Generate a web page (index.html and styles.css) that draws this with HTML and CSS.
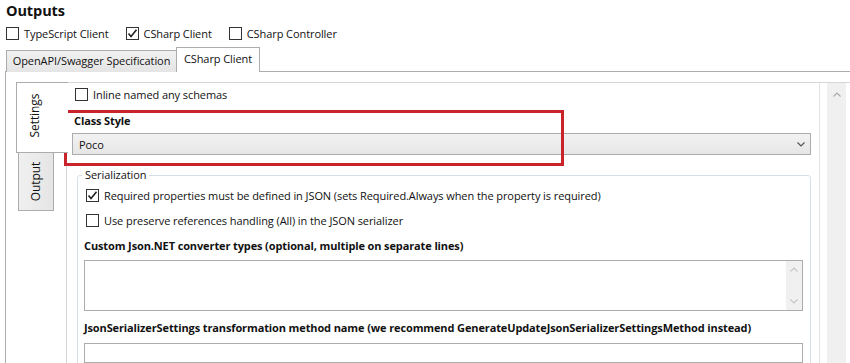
FILE: index.html
```html
<!DOCTYPE html>
<html>
<head>
<meta charset="utf-8">
<link rel="stylesheet" href="styles.css">
</head>
<body>
<div class="title">Outputs</div>
<div class="outs">
  <div class="chk"><span class="box"></span><span>TypeScript Client</span></div>
  <div class="chk"><span class="box"><svg viewBox="0 0 13 13" width="13" height="13"><path d="M2.5 6.5 L5 9.5 L10.5 2.8" fill="none" stroke="#222" stroke-width="1.6"/></svg></span><span>CSharp Client</span></div>
  <div class="chk"><span class="box"></span><span>CSharp Controller</span></div>
</div>
<div class="tabs">
  <div class="tab">OpenAPI/Swagger Specification</div>
  <div class="tab sel">CSharp Client</div>
</div>
<div class="panel">
  <div class="vtabs">
    <div class="vtab sel"><span>Settings</span></div>
    <div class="vtab"><span>Output</span></div>
  </div>
  <div class="frame">
    <div class="content">
      <div class="chk inline"><span class="box"></span><span>Inline named any schemas</span></div>
      <div class="lbl first">Class Style</div>
      <div class="combo"><span>Poco</span><svg viewBox="0 0 8 5" width="8" height="5"><path d="M0.5 0.5 L4 4 L7.5 0.5" fill="none" stroke="#555" stroke-width="1.2"/></svg></div>
      <div class="group">
        <div class="legend">Serialization</div>
        <div class="chk gchk c1"><span class="box"><svg viewBox="0 0 13 13" width="13" height="13"><path d="M2.5 6.5 L5 9.5 L10.5 2.8" fill="none" stroke="#222" stroke-width="1.6"/></svg></span><span>Required properties must be defined in JSON (sets Required.Always when the property is required)</span></div>
        <div class="chk gchk c2"><span class="box"></span><span>Use preserve references handling (All) in the JSON serializer</span></div>
        <div class="lbl">Custom Json.NET converter types (optional, multiple on separate lines)</div>
        <div class="area">
          <div class="ascroll">
            <svg viewBox="0 0 8 5" width="8" height="5"><path d="M0.5 4.5 L4 1 L7.5 4.5" fill="none" stroke="#c4c4c4" stroke-width="1.1"/></svg>
            <svg viewBox="0 0 8 5" width="8" height="5"><path d="M0.5 0.5 L4 4 L7.5 0.5" fill="none" stroke="#c4c4c4" stroke-width="1.1"/></svg>
          </div>
        </div>
        <div class="lbl">JsonSerializerSettings transformation method name (we recommend GenerateUpdateJsonSerializerSettingsMethod instead)</div>
        <div class="input"></div>
      </div>
      <div class="redbox"></div>
    </div>
    <div class="vscroll">
      <svg viewBox="0 0 8 5" width="8" height="5"><path d="M0.5 4.5 L4 1 L7.5 4.5" fill="none" stroke="#a8a8a8" stroke-width="1.1"/></svg>
    </div>
  </div>
</div>
</body>
</html>
```

FILE: styles.css
```css
* { box-sizing: border-box; }
html, body { margin: 0; padding: 0; background: #fff; }
body {
  width: 850px;
  height: 363px;
  overflow: hidden;
  font-family: "Open Sans", "Noto Sans", sans-serif;
  font-size: 11px;
  letter-spacing: -0.08px;
  color: #111;
}
.title {
  font-size: 14.5px;
  font-weight: 700;
  letter-spacing: -0.1px;
  padding: 1px 0 0 6px;
  height: 21px;
  line-height: 19px;
}
.outs {
  display: flex;
  gap: 17px;
  padding-left: 6px;
  margin-top: 4px;
  height: 16px;
}
.chk {
  display: flex;
  align-items: center;
  gap: 5px;
  line-height: 15px;
  white-space: nowrap;
}
.box {
  width: 13px;
  height: 13px;
  border: 1px solid #333;
  background: #fff;
  display: inline-flex;
  flex: none;
  position: relative;
}
.box svg { position: absolute; left: -1px; top: -1px; }
.tabs {
  display: flex;
  align-items: flex-end;
  padding-left: 6px;
  margin-top: 6px;
  height: 24px;
  position: relative;
  z-index: 2;
}
.tab {
  height: 22px;
  line-height: 20px;
  padding: 0;
  border: 1px solid #acacac;
  border-bottom: none;
  background: linear-gradient(#f0f0f0, #e5e5e5);
  margin-bottom: -1px;
  width: 171px;
  text-align: center;
  white-space: nowrap;
}
.tab.sel {
  height: 25px;
  line-height: 22px;
  background: #fff;
  width: 84px;
  margin-left: -1px;
  margin-bottom: -1px;
}
.panel {
  margin-left: 5px;
  border-top: 1px solid #acacac;
  border-left: 1px solid #acacac;
  height: 300px;
  display: flex;
  padding-top: 10px;
}
.vtabs {
  width: 61px;
  padding-left: 10px;
  flex: none;
  position: relative;
  z-index: 2;
}
.vtab {
  width: 36px;
  height: 58px;
  margin-left: 2px;
  border: 1px solid #acacac;
  border-top: none;
  background: linear-gradient(90deg, #f0f0f0, #e5e5e5);
  display: flex;
  align-items: center;
  justify-content: center;
}
.vtab span {
  transform: rotate(-90deg);
  white-space: nowrap;
  font-size: 12px;
}
.vtab.sel {
  width: 52px;
  height: 71px;
  margin-left: 0;
  border-top: 1px solid #acacac;
  border-right: none;
  background: #fff;
  padding-right: 16px;
  padding-bottom: 4px;
}
.frame {
  flex: 1;
  display: flex;
  border-top: 1px solid #d6d6d6;
  border-left: 1px solid #d6d6d6;
  margin-left: -1px;
}
.content {
  flex: none;
  width: 753px;
  border-right: 1px solid #e4e4e4;
  padding: 4px 0 0 5px;
  position: relative;
}
.inline { margin-left: 3px; height: 15px; }
.lbl {
  font-weight: 700;
  letter-spacing: -0.12px;
  line-height: 15px;
  margin-top: 10px;
  white-space: nowrap;
}
.lbl.first { margin-top: 11px; margin-left: 2px; }
.combo {
  margin-top: 5px;
  width: 739px;
  height: 22px;
  border: 1px solid #acacac;
  background: linear-gradient(#f2f2f2, #e6e6e6);
  display: flex;
  align-items: center;
  justify-content: space-between;
  padding: 0 5px 0 6px;
}
.group {
  margin: 20px 0 0 5px;
  width: 734px;
  border: 1px solid #d5dfe5;
  border-radius: 3px;
  padding: 12px 8px 0 6px;
  height: 200px;
  position: relative;
}
.legend {
  position: absolute;
  top: -9px;
  left: 4px;
  background: #fff;
  padding: 0 3px;
  line-height: 15px;
}
.gchk { margin-left: 2px; }
.c1 { margin-bottom: 10px; }
.c2 { margin-bottom: 10px; }
.group .lbl { margin-top: 0; }
.area {
  margin-top: 7px;
  width: 719px;
  height: 51px;
  border: 1px solid #acacac;
  display: flex;
  justify-content: flex-end;
  margin-bottom: 9px;
}
.ascroll {
  width: 16px;
  background: #f0f0f0;
  display: flex;
  flex-direction: column;
  justify-content: space-between;
  align-items: center;
  padding: 6px 0;
}
.input {
  margin-top: 8px;
  width: 719px;
  height: 20px;
  border: 1px solid #acacac;
}
.redbox {
  position: absolute;
  left: -3px;
  top: 27px;
  width: 500px;
  height: 56px;
  border: 3px solid #c9232b;
}
.vscroll {
  margin-left: 7px;
  width: 19px;
  background: #f0f0f0;
  display: flex;
  justify-content: center;
  padding-top: 9px;
}
```
